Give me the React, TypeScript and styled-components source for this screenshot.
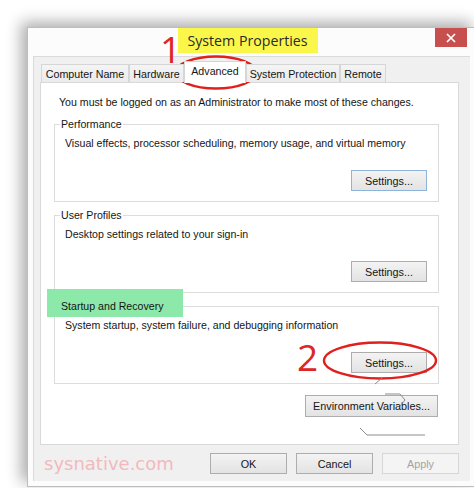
import React from "react";
import styled, { createGlobalStyle } from "styled-components";

const GlobalStyle = createGlobalStyle`
  html, body {
    margin: 0;
    padding: 0;
    background: #fff;
  }
  body {
    font-family: "Liberation Sans", Arial, sans-serif;
    color: #151515;
  }
`;

const Page = styled.div`
  position: relative;
  width: 474px;
  height: 488px;
  overflow: hidden;
  padding: 27px 0 0 27px;
  box-sizing: border-box;
`;

const Window = styled.div`
  width: 450px;
  height: 460px;
  box-sizing: border-box;
  background: #fcfcfc;
  border: 1px solid #bdbdbd;
  box-shadow: -6px -5px 14px rgba(0, 0, 0, 0.32);
  padding: 0 6px 5px 5px;
  display: flex;
  flex-direction: column;
`;

const TitleBar = styled.div`
  height: 28px;
  margin: 0 -6px 0 -5px;
  padding-right: 9px;
  display: grid;
  grid-template-columns: 1fr auto 1fr;
  align-items: start;
`;

const Title = styled.div`
  grid-column: 2;
  width: 140px;
  height: 25px;
  line-height: 25px;
  text-align: center;
  background: #fbf64a;
  font-family: "Open Sans", "Liberation Sans", sans-serif;
  font-size: 14.2px;
  color: #2a2a2a;
`;

const CloseButton = styled.div`
  grid-column: 3;
  justify-self: end;
  width: 32px;
  height: 19px;
  background: #c7504f;
  display: flex;
  align-items: center;
  justify-content: center;
`;

const Client = styled.div`
  flex: 1;
  background: #f0f0f0;
  border-top: 1px solid #dadada;
  border-left: 1px solid #dadada;
  padding: 4px 11px 0 6px;
  display: flex;
  flex-direction: column;
`;

const TabStrip = styled.div`
  display: flex;
  align-items: flex-start;
  height: 22px;
  padding-left: 1px;
  margin-bottom: -1px;
  position: relative;
  z-index: 1;
`;

const Tab = styled.div<{ $w: number; $active?: boolean }>`
  width: ${(p) => p.$w}px;
  height: ${(p) => (p.$active ? 22 : 18)}px;
  margin-top: ${(p) => (p.$active ? 0 : 3)}px;
  box-sizing: border-box;
  border: 1px solid #d6d6d6;
  border-bottom: none;
  background: ${(p) =>
    p.$active ? "#fff" : "linear-gradient(#f4f4f4, #ebebeb)"};
  display: flex;
  align-items: center;
  justify-content: center;
  padding-bottom: ${(p) => (p.$active ? 3 : 0)}px;
  font-size: 10.7px;
  white-space: nowrap;
`;

const Panel = styled.div`
  height: 363px;
  box-sizing: border-box;
  background: #fff;
  border: 1px solid #d9d9d9;
  padding-top: 12px;
  display: flex;
  flex-direction: column;
`;

const Intro = styled.div`
  margin-left: 18px;
  font-size: 10.6px;
  line-height: 14px;
`;

const Group = styled.fieldset<{ $first?: boolean }>`
  margin: ${(p) => (p.$first ? 8 : 6)}px 19px 0 13px;
  padding: 0 11px 10px 10px;
  border: 1px solid #dcdcdc;
  min-width: 0;
`;

const Legend = styled.legend`
  position: relative;
  margin-left: -5px;
  padding: 0 1px;
  font-size: 10.6px;
  line-height: 14px;
`;

const LegendText = styled.span`
  position: relative;
  z-index: 1;
`;

const GreenMark = styled.span`
  position: absolute;
  left: -13px;
  top: -10px;
  width: 136px;
  height: 28px;
  background: #86e8a4;
  opacity: 0.95;
`;

const Desc = styled.div`
  margin-top: 5px;
  font-size: 10.6px;
  line-height: 14px;
`;

const ButtonRow = styled.div<{ $top: number; $right?: number }>`
  display: flex;
  justify-content: flex-end;
  margin-top: ${(p) => p.$top}px;
  margin-right: ${(p) => p.$right ?? 0}px;
`;

const Button = styled.div<{ $w: number; $h?: number; $focus?: boolean; $disabled?: boolean }>`
  width: ${(p) => p.$w}px;
  height: ${(p) => p.$h ?? 21}px;
  box-sizing: border-box;
  border: 1px solid
    ${(p) => (p.$focus ? "#8fb4dc" : p.$disabled ? "#d6d6d6" : "#adadad")};
  background: ${(p) =>
    p.$disabled ? "#f4f4f4" : "linear-gradient(#f3f3f3, #e3e3e3)"};
  color: ${(p) => (p.$disabled ? "#a3a3a3" : "#151515")};
  display: flex;
  align-items: center;
  justify-content: center;
  font-size: 10.8px;
  white-space: nowrap;
`;

const BottomRow = styled.div`
  margin-top: 8px;
  display: flex;
  align-items: center;
`;

const Watermark = styled.div`
  margin-left: 4px;
  font-family: "DejaVu Sans", Verdana, sans-serif;
  font-size: 18px;
  line-height: 21px;
  color: #f3b9bd;
`;

const DialogButtons = styled.div`
  margin-left: auto;
  display: flex;
  gap: 9px;
`;

const Overlay = styled.svg`
  position: absolute;
  left: 0;
  top: 0;
  pointer-events: none;
`;

// hand-drawn step numbers; tight box around the digit
const Step = styled.span<{ $x: number; $y: number }>`
  position: absolute;
  left: ${(p) => p.$x}px;
  top: ${(p) => p.$y}px;
  font-family: "Open Sans", "Liberation Sans", sans-serif;
  font-size: 37px;
  line-height: 27px;
  letter-spacing: -5px;
  color: #dd2626;
`;

const tabs = [
  { label: "Computer Name", w: 88 },
  { label: "Hardware", w: 55 },
  { label: "Advanced", w: 62, active: true },
  { label: "System Protection", w: 94 },
  { label: "Remote", w: 46 },
];

const groups = [
  {
    title: "Performance",
    text: "Visual effects, processor scheduling, memory usage, and virtual memory",
    focus: true,
  },
  { title: "User Profiles", text: "Desktop settings related to your sign-in" },
  {
    title: "Startup and Recovery",
    text: "System startup, system failure, and debugging information",
    mark: true,
  },
];

const App: React.FC = () => {
  return (
    <Page>
      <GlobalStyle />
      <Window>
        <TitleBar>
          <Title>System Properties</Title>
          <CloseButton>
            <svg width="10" height="10" viewBox="0 0 10 10">
              <path d="M1 1L9 9M9 1L1 9" stroke="#fff" strokeWidth="1.7" />
            </svg>
          </CloseButton>
        </TitleBar>
        <Client>
          <TabStrip>
            {tabs.map((t) => (
              <Tab key={t.label} $w={t.w} $active={t.active}>
                {t.label}
              </Tab>
            ))}
          </TabStrip>
          <Panel>
            <Intro>
              You must be logged on as an Administrator to make most of these
              changes.
            </Intro>
            {groups.map((g, i) => (
              <Group key={g.title} $first={i === 0}>
                <Legend>
                  {g.mark && <GreenMark />}
                  <LegendText>{g.title}</LegendText>
                </Legend>
                <Desc>{g.text}</Desc>
                <ButtonRow $top={20}>
                  <Button $w={76} $focus={g.focus}>
                    Settings...
                  </Button>
                </ButtonRow>
              </Group>
            ))}
            <ButtonRow $top={11} $right={20}>
              <Button $w={133} $h={22}>
                Environment Variables...
              </Button>
            </ButtonRow>
          </Panel>
          <BottomRow>
            <Watermark>sysnative.com</Watermark>
            <DialogButtons>
              <Button $w={77}>OK</Button>
              <Button $w={77}>Cancel</Button>
              <Button $w={77} $disabled>
                Apply
              </Button>
            </DialogButtons>
          </BottomRow>
        </Client>
      </Window>

      <Overlay width="474" height="488" viewBox="0 0 474 488">
        <ellipse cx="216" cy="72.5" rx="40" ry="16" fill="none" stroke="#e0201c" strokeWidth="2.4" />
        <ellipse cx="380" cy="360.5" rx="56" ry="18" fill="none" stroke="#e0201c" strokeWidth="2.4" />
        <g fill="none" stroke="#8c8c8c" strokeWidth="1">
          <path d="M375 384L382 378" />
          <path d="M385 394H400L405 400L400 406" />
          <path d="M360 428L367 435H425" />
        </g>
      </Overlay>
      <Step $x={160} $y={35}>1</Step>
      <Step $x={297} $y={343}>2</Step>
    </Page>
  );
};

export default App;
